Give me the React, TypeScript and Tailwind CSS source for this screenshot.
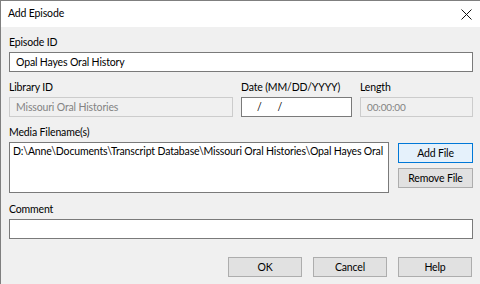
import React from 'react';

const font = { fontFamily: 'Lato, "Segoe UI", sans-serif' };

function Field({ children, disabled, className }: { children?: React.ReactNode; disabled?: boolean; className?: string }) {
  return (
    <div
      className={
        'h-[20px] flex items-center px-[6px] text-[10.5px] tracking-[-0.15px] leading-none border ' +
        (disabled ? 'bg-[#f0f0f0] border-[#cccccc] text-[#838383] ' : 'bg-white border-[#7a7a7a] text-black ') +
        (className ?? '')
      }
    >
      {children}
    </div>
  );
}

function Button({ label, primary, className }: { label: string; primary?: boolean; className?: string }) {
  return (
    <div
      className={
        'h-[20px] flex items-center justify-center text-[10.5px] tracking-[-0.15px] leading-none text-black border ' +
        (primary ? 'bg-[#e5f1fb] border-[#0078d7] ' : 'bg-[#e1e1e1] border-[#adadad] ') +
        (className ?? '')
      }
    >
      {label}
    </div>
  );
}

export default function App() {
  return (
    <div className="w-[480px] h-[284px] overflow-hidden flex flex-col bg-[#f0f0f0] border-l border-t border-[#7f7f7f]" style={font}>
      {/* Title bar */}
      <div className="h-[26px] bg-white flex items-center justify-between pl-[7px] pr-[5px] shrink-0">
        <span className="text-[10.5px] tracking-[-0.15px] text-black">Add Episode</span>
        <svg width="11" height="11" viewBox="0 0 11 11" className="mr-[3px]">
          <path d="M0.5 0.5 L10.5 10.5 M10.5 0.5 L0.5 10.5" stroke="#111" strokeWidth="1" />
        </svg>
      </div>

      {/* Body */}
      <div className="flex-1 flex flex-col pl-[8px] pr-[7px] pt-[7px] text-[10.5px] tracking-[-0.15px] text-black">
        <div className="h-[16px] leading-[16px]">Episode ID</div>
        <Field className="mt-[2px]">Opal Hayes Oral History</Field>

        <div className="flex gap-[8px] mt-[7px]">
          <div className="w-[224px] flex flex-col">
            <div className="h-[16px] leading-[16px]">Library ID</div>
            <Field disabled className="mt-[2px]">Missouri Oral Histories</Field>
          </div>
          <div className="w-[111px] flex flex-col">
            <div className="h-[16px] leading-[16px] whitespace-nowrap">Date (MM/DD/YYYY)</div>
            <Field className="mt-[2px]">
              <span className="ml-[9px]">/</span>
              <span className="ml-[16px]">/</span>
            </Field>
          </div>
          <div className="flex-1 flex flex-col">
            <div className="h-[16px] leading-[16px]">Length</div>
            <Field disabled className="mt-[2px] text-[10px]">00:00:00</Field>
          </div>
        </div>

        <div className="h-[16px] leading-[16px] mt-[7px]">Media Filename(s)</div>
        <div className="flex gap-[9px] mt-[2px]">
          <div className="w-[380px] h-[51px] bg-white border border-[#7a7a7a] px-[3px] pt-[1px] leading-[14px] whitespace-nowrap overflow-hidden">
            D:\Anne\Documents\Transcript Database\Missouri Oral Histories\Opal Hayes Oral
          </div>
          <div className="flex flex-col gap-[5px] w-[75px] pt-[1px]">
            <Button label="Add File" primary />
            <Button label="Remove File" />
          </div>
        </div>

        <div className="h-[16px] leading-[16px] mt-[8px]">Comment</div>
        <Field className="mt-[2px]" />

        <div className="flex justify-end gap-[11px] mt-[18px] pr-[1px]">
          <Button label="OK" className="w-[74px]" />
          <Button label="Cancel" className="w-[74px]" />
          <Button label="Help" className="w-[74px]" />
        </div>
      </div>
    </div>
  );
}
